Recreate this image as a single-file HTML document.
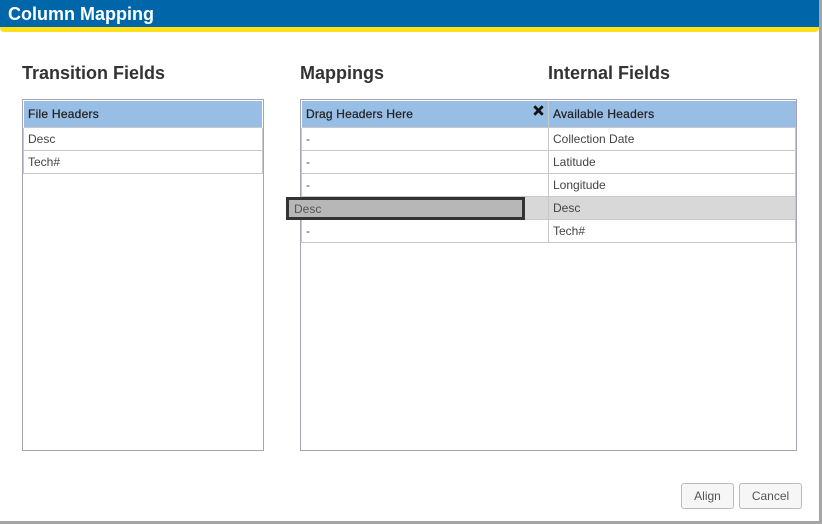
<!DOCTYPE html>
<html><head><meta charset="utf-8">
<style>
html,body{margin:0;padding:0;background:#fff}
body{width:822px;height:524px;position:relative;overflow:hidden;font-family:"Liberation Sans",sans-serif;font-size:12px;color:#444}
div{position:absolute;box-sizing:border-box;white-space:nowrap}
.h2{font-size:18px;font-weight:bold;color:#333;line-height:20px;height:20px}
.box{border:1px solid #a3a5b0;background:#fff}
.hd{background:#99bee6;color:#222;line-height:27px;height:27px;letter-spacing:.25px;font-size:12px;border-bottom:1px solid #c8c8cc;-webkit-text-stroke:.25px #222}
.ht{line-height:27px;color:#222;-webkit-text-stroke:.25px #222}
.c{height:23px;line-height:22px;border-bottom:1px solid #c8c8cc;border-right:1px solid #c8c8cc;border-left:1px solid #c8c8cc}
.btn{top:483px;height:26px;border:1px solid #bbb;border-radius:3px;background:#f6f6f6;color:#555;text-align:center;line-height:24px;font-size:12px}
.t{line-height:22px}
</style></head><body>
<div style="left:0;top:0;width:819px;height:32px;background:#ffe11a;border-radius:0 0 4px 4px"></div>
<div style="left:0;top:0;width:819px;height:27px;background:#0066aa"></div>
<div style="left:8px;top:3px;font-size:18px;font-weight:bold;color:#fff;line-height:22px">Column Mapping</div>
<div style="left:819px;top:0;width:3px;height:524px;background:#a5a5a5"></div>
<div style="left:0;top:521px;width:822px;height:3px;background:#a5a5a5"></div>

<div class="h2" style="left:22px;top:63px">Transition Fields</div>
<div class="h2" style="left:300px;top:63px">Mappings</div>
<div class="h2" style="left:548px;top:63px">Internal Fields</div>

<div class="box" style="left:22px;top:99px;width:242px;height:352px"></div>
<div class="hd" style="left:24px;top:101px;width:238px;padding-left:4px">File Headers</div>
<div class="c" style="left:23px;top:128px;width:240px;padding-left:4px">Desc</div>
<div class="c" style="left:23px;top:151px;width:240px;padding-left:4px">Tech#</div>

<div class="box" style="left:300px;top:99px;width:497px;height:352px"></div>
<div class="hd" style="left:302px;top:101px;width:494px"></div>
<div class="ht" style="left:306px;top:101px;letter-spacing:.18px">Drag Headers Here</div>
<div class="ht" style="left:553px;top:101px;letter-spacing:.25px">Available Headers</div>
<div style="left:548px;top:101px;width:1px;height:142px;background:#c8c8cc"></div>
<svg style="position:absolute;left:533px;top:105px" width="11" height="11" viewBox="0 0 11 11"><path d="M1.3 1.3L9.7 9.7M9.7 1.3L1.3 9.7" stroke="#111" stroke-width="2.8" fill="none"/></svg>

<div class="c" style="left:301px;top:128px;width:495px;padding-left:4px">-</div>
<div class="c" style="left:301px;top:151px;width:495px;padding-left:4px">-</div>
<div class="c" style="left:301px;top:174px;width:495px;padding-left:4px">-</div>
<div class="c" style="left:301px;top:197px;width:495px;background:#d8d8d8"></div>
<div class="c" style="left:301px;top:220px;width:495px;padding-left:4px">-</div>
<div style="left:548px;top:128px;width:1px;height:115px;background:#c8c8cc"></div>
<div class="t" style="left:553px;top:128px">Collection Date</div>
<div class="t" style="left:553px;top:151px">Latitude</div>
<div class="t" style="left:553px;top:174px">Longitude</div>
<div class="t" style="left:553px;top:197px">Desc</div>
<div class="t" style="left:553px;top:220px">Tech#</div>

<div style="left:286px;top:197px;width:239px;height:23px;background:#b7b7b7;border:3px solid #333;line-height:18px;padding-left:5px;color:#555">Desc</div>

<div class="btn" style="left:681px;width:53px">Align</div>
<div class="btn" style="left:739px;width:63px">Cancel</div>
</body></html>
